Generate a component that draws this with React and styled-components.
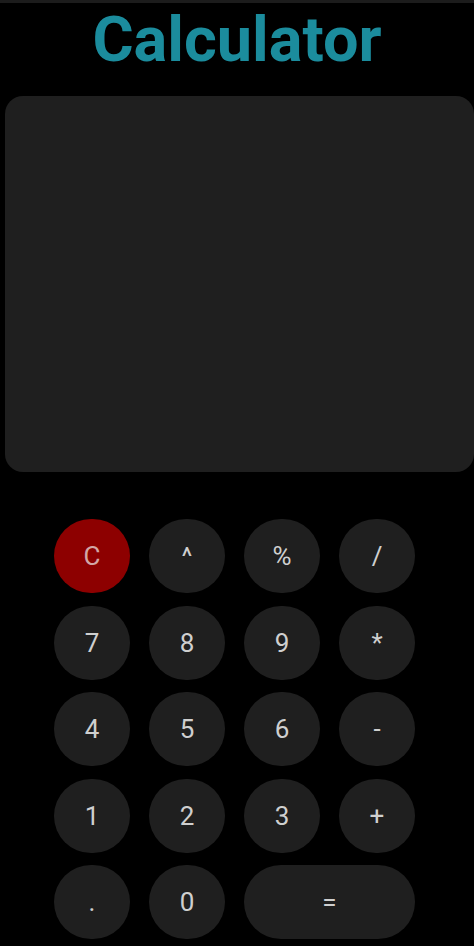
import React from 'react';
import styled, { createGlobalStyle } from 'styled-components';

const GlobalStyle = createGlobalStyle`
  html, body {
    margin: 0;
    padding: 0;
    background: #000;
    font-family: Roboto, "Liberation Sans", sans-serif;
  }
`;

const Page = styled.div`
  min-height: 946px;
  background: #000;
  border-top: 3px solid #1c1c1c;
  box-sizing: border-box;
`;

const Title = styled.h1`
  margin: 0;
  padding-top: 0;
  height: 93px;
  line-height: 74px;
  font-size: 63px;
  font-weight: 700;
  text-align: center;
  color: #1b8c9d;
`;

const Display = styled.div`
  margin-left: 5px;
  width: calc(100% - 5px);
  height: 376px;
  background: #1f1f1f;
  border-radius: 18px;
`;

const Keypad = styled.div`
  display: grid;
  grid-template-columns: repeat(4, 76px);
  grid-auto-rows: 74px;
  column-gap: 19px;
  row-gap: 12.5px;
  margin: 47px 0 0 54px;
`;

const Key = styled.button`
  grid-column: span ${(p) => (p.$wide ? 2 : 1)};
  border: none;
  border-radius: 37px;
  background: ${(p) => (p.$danger ? '#8d0000' : '#1f1f1f')};
  color: ${(p) => (p.$danger ? '#d2a6a6' : '#cfcfcf')};
  font-family: Roboto, "Liberation Sans", sans-serif;
  font-size: 26px;
  font-weight: 400;
  padding: 0;
  display: flex;
  align-items: center;
  justify-content: center;
`;

const keys = [
  { label: 'C', danger: true },
  { label: '^' },
  { label: '%' },
  { label: '/' },
  { label: '7' },
  { label: '8' },
  { label: '9' },
  { label: '*' },
  { label: '4' },
  { label: '5' },
  { label: '6' },
  { label: '-' },
  { label: '1' },
  { label: '2' },
  { label: '3' },
  { label: '+' },
  { label: '.' },
  { label: '0' },
  { label: '=', wide: true },
];

export default function App() {
  return (
    <Page>
      <GlobalStyle />
      <Title>Calculator</Title>
      <Display />
      <Keypad>
        {keys.map((k) => (
          <Key key={k.label} $danger={k.danger} $wide={k.wide}>
            {k.label}
          </Key>
        ))}
      </Keypad>
    </Page>
  );
}
